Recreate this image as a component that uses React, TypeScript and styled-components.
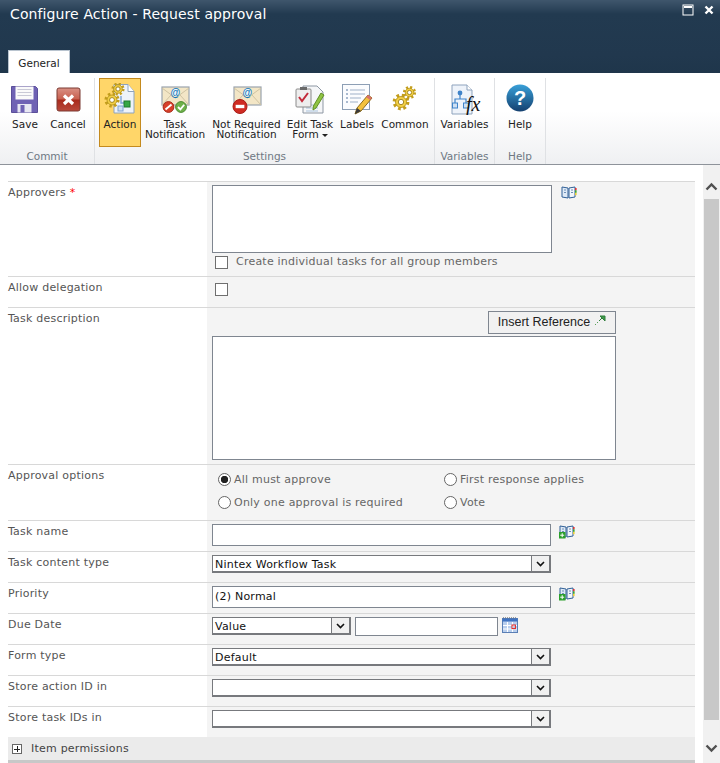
import React from 'react'
import styled, { createGlobalStyle } from 'styled-components'

const GlobalStyle = createGlobalStyle`
  html, body {
    margin: 0;
    padding: 0;
    background: #fff;
  }
  * {
    box-sizing: border-box;
  }
`

const Gear = ({ x, y, r, hub = '#fff' }: { x: number; y: number; r: number; hub?: string }) => {
  const c = 2 * Math.PI * r
  return (
    <g>
      <circle cx={x} cy={y} r={r} fill="none" stroke="#c39d1c" strokeWidth={r * 0.62} strokeDasharray={`${c / 16} ${c / 16}`} />
      <circle cx={x} cy={y} r={r * 0.86} fill="#f2cf45" stroke="#b08f18" strokeWidth="0.8" />
      <circle cx={x} cy={y} r={r * 0.42} fill={hub} stroke="#9c7e14" strokeWidth="0.9" />
    </g>
  )
}

const SaveIcon = () => (
  <svg width="32" height="32" viewBox="0 0 32 32">
    <path d="M2.5 3.5h24l2 2v24h-26z" fill="#6f62b4" stroke="#5b4f9a" />
    <rect x="6.5" y="3.5" width="18" height="13" fill="#fafafa" />
    <path d="M8.5 6.5h14M8.5 9.5h14M8.5 12.5h14" stroke="#c9c9d6" />
    <rect x="8.5" y="21" width="14" height="8.5" fill="#e8e8f2" />
    <rect x="11.5" y="22" width="4" height="7.5" fill="#6f62b4" />
  </svg>
)

const CancelIcon = () => (
  <svg width="32" height="32" viewBox="0 0 32 32">
    <defs>
      <linearGradient id="cancelFill" x1="0" y1="0" x2="0" y2="1">
        <stop offset="0" stopColor="#d99084" />
        <stop offset="0.48" stopColor="#c8604f" />
        <stop offset="0.52" stopColor="#a92a1c" />
        <stop offset="1" stopColor="#b9493b" />
      </linearGradient>
    </defs>
    <rect x="5" y="5" width="23" height="23" rx="2" fill="url(#cancelFill)" stroke="#7b3a33" />
    <path d="M12 12.5l9 8.5M21 12.5l-9 8.5" stroke="#fff" strokeWidth="3.2" />
  </svg>
)

const ActionIcon = () => (
  <svg width="32" height="32" viewBox="0 0 32 32">
    <path d="M10 1.5h14l6 7v21.5H10z" fill="#eef3fa" stroke="#8ea3bd" />
    <path d="M24 1.5v7h6" fill="#fff" stroke="#8ea3bd" />
    <path d="M17 13v7h6" fill="none" stroke="#7fa3d3" strokeWidth="1.4" />
    <rect x="20" y="18" width="6" height="6" fill="#36a744" stroke="#1f7b2c" />
    <rect x="14" y="23" width="5" height="5" fill="#cfe0f3" stroke="#7fa3d3" />
    <Gear x={14} y={6} r={5} />
    <Gear x={8} y={17} r={5.8} />
  </svg>
)

const Envelope = () => (
  <>
    <rect x="3" y="4" width="27" height="18" fill="#f3e6c6" stroke="#9aa3ad" strokeWidth="1.2" />
    <path d="M3 5l13.5 10L30 5M3 22l9-10M30 22l-9-10" fill="none" stroke="#cfc3a2" />
    <circle cx="16.5" cy="9.5" r="4" fill="#eef6fb" />
    <text x="16.5" y="13" fontSize="10" fontWeight="700" fontFamily="'Liberation Sans', sans-serif" textAnchor="middle" fill="#1277b8">@</text>
  </>
)

const NoEntry = ({ x, y, r }: { x: number; y: number; r: number }) => (
  <g>
    <circle cx={x} cy={y} r={r} fill="#cf2b22" stroke="#a81c16" />
    <rect x={x - r * 0.62} y={y - r * 0.24} width={r * 1.24} height={r * 0.48} fill="#fff" />
  </g>
)

const TaskNotificationIcon = () => (
  <svg width="32" height="32" viewBox="0 0 32 32">
    <Envelope />
    <circle cx="9.5" cy="24" r="5.4" fill="#d8402a" stroke="#a82a1a" />
    <path d="M6.5 26.5l6-5" stroke="#fff" strokeWidth="2" />
    <circle cx="22" cy="24" r="5.4" fill="#6fb14a" stroke="#4d8d32" />
    <path d="M19 24l2.4 2.4 3.8-4.6" fill="none" stroke="#fff" strokeWidth="1.8" />
  </svg>
)

const NotRequiredIcon = () => (
  <svg width="32" height="32" viewBox="0 0 32 32">
    <Envelope />
    <NoEntry x={9} y={23.5} r={7} />
  </svg>
)

const EditFormIcon = () => (
  <svg width="32" height="32" viewBox="0 0 32 32">
    <path d="M9 3h14l6 6v21H9z" fill="#f5f6f8" stroke="#8d97a3" />
    <path d="M12 22h12M12 25h12M12 28h12" stroke="#a9c3dd" />
    <rect x="2" y="6" width="15" height="18" rx="1" fill="#eee" stroke="#8a8a8a" />
    <rect x="6" y="4" width="7" height="3" fill="#6a6a6a" />
    <path d="M5 14l3 4 6-8" fill="none" stroke="#c22a3a" strokeWidth="2" />
    <path d="M27 10l3 2-8 13-3 2 .4-4z" fill="#90c443" stroke="#5f8f25" />
  </svg>
)

const LabelsIcon = () => (
  <svg width="32" height="32" viewBox="0 0 32 32">
    <rect x="1.5" y="1.5" width="27" height="25" fill="#fbfcfe" stroke="#8d9fb5" />
    <path d="M5 7h2M5 11h2M5 15h2M5 19h2" stroke="#5677a0" />
    <path d="M9 7h15M9 11h15M9 15h11M9 19h8" stroke="#9fb1c8" />
    <path d="M27 12l4 3-11 13-6 3 2-6z" fill="#f3c13c" stroke="#8a6a1a" />
    <path d="M27 12l4 3-2 2-4-3z" fill="#d9706a" />
    <path d="M16 25l-2 6 6-3z" fill="#3a3a3a" />
  </svg>
)

const CommonIcon = () => (
  <svg width="32" height="32" viewBox="0 0 32 32">
    <Gear x={20.5} y={9.5} r={5} />
    <Gear x={12} y={19} r={6.4} />
  </svg>
)

const VariablesIcon = () => (
  <svg width="32" height="32" viewBox="0 0 32 32">
    <path d="M3 2h15l5 5v24H3z" fill="#eef3fa" stroke="#8ea3bd" />
    <path d="M18 2v5h5" fill="#fff" stroke="#8ea3bd" />
    <circle cx="11" cy="10" r="2.4" fill="#3f83c9" />
    <path d="M11 12v4M6 20v-4h11v4" fill="none" stroke="#3f83c9" strokeWidth="1.2" />
    <rect x="3.5" y="20" width="5" height="5" fill="#cfe0f3" stroke="#3f83c9" />
    <rect x="14.5" y="20" width="5" height="5" fill="#cfe0f3" stroke="#3f83c9" />
    <text x="17" y="28" fontSize="20" fontStyle="italic" fontFamily="'Liberation Serif', serif" fill="#111">fx</text>
  </svg>
)

const HelpIcon = () => (
  <svg width="32" height="32" viewBox="0 0 32 32">
    <defs>
      <linearGradient id="helpFill" x1="0" y1="0" x2="0" y2="1">
        <stop offset="0" stopColor="#39a0d8" />
        <stop offset="1" stopColor="#14406f" />
      </linearGradient>
    </defs>
    <circle cx="16" cy="15" r="13.5" fill="url(#helpFill)" />
    <text x="16" y="22" fontSize="20" fontWeight="700" fontFamily="'Liberation Sans', sans-serif" textAnchor="middle" fill="#fff">?</text>
  </svg>
)

const BookIcon = ({ plus = false }: { plus?: boolean }) => (
  <svg width="16" height="15" viewBox="0 0 16 15">
    <path d="M1 2l6 1v10l-6-1z" fill="#dfeaf6" stroke="#2f5f96" />
    <path d="M14 2l-6 1v10l6-1z" fill="#f2f6fb" stroke="#2f5f96" />
    <path d="M3 5h2M3 7.5h2M10 5h2M10 7.5h2" stroke="#6e8fb6" />
    <rect x="14" y="3" width="1.6" height="2.4" fill="#d33" />
    <rect x="14" y="5.4" width="1.6" height="2.4" fill="#3a3" />
    <rect x="14" y="7.8" width="1.6" height="2.4" fill="#ec3" />
    {plus && (
      <>
        <rect x="0" y="8" width="6.5" height="6.5" fill="#2ca02c" />
        <path d="M3.2 9.2v4M1.2 11.2h4" stroke="#fff" />
      </>
    )}
  </svg>
)

const CalendarIcon = () => (
  <svg width="16" height="16" viewBox="0 0 16 16">
    <rect x="0.5" y="1.5" width="15" height="14" fill="#b9cfee" stroke="#5a7fb5" />
    <rect x="0.5" y="1.5" width="15" height="3" fill="#3f73c2" />
    <path d="M1 0.8h14" stroke="#777" strokeDasharray="1 1" />
    <path d="M5.5 5v10M10.5 5v10M1 8.5h14M1 12h14" stroke="#fff" />
    <rect x="10" y="8" width="3.4" height="3.6" fill="none" stroke="#d22" />
  </svg>
)

const ChevronDown = () => (
  <svg width="9" height="6" viewBox="0 0 9 6">
    <path d="M1 1l3.5 3.5L8 1" fill="none" stroke="#111" strokeWidth="1.6" />
  </svg>
)

const Page = styled.div`
  width: 720px;
  height: 763px;
  overflow: hidden;
  display: flex;
  flex-direction: column;
  font-family: 'DejaVu Sans', Verdana, sans-serif;
`

const TitleBar = styled.header`
  height: 73px;
  flex: none;
  display: flex;
  flex-direction: column;
  position: relative;
  background: linear-gradient(#3f566c 0, #223a50 14px, #21384e 55px, #1f364b 73px);
`

const Title = styled.h1`
  margin: 0;
  padding: 6px 0 0 10px;
  height: 50px;
  font-size: 14px;
  line-height: 17px;
  font-weight: 400;
  letter-spacing: 0.11px;
  color: #fff;
`

const WindowButtons = styled.div`
  position: absolute;
  top: 4px;
  right: 5px;
  display: flex;
  gap: 9px;
`

const Tabs = styled.nav`
  padding-left: 8px;
  display: flex;
`

const Tab = styled.div`
  width: 62px;
  height: 23px;
  background: #fff;
  border: 1px solid #b9c4cf;
  border-bottom: none;
  text-align: center;
  font-size: 10.5px;
  line-height: 24px;
  color: #222;
`

const Ribbon = styled.div`
  height: 92px;
  flex: none;
  display: flex;
  background: linear-gradient(#fff 0, #fff 38px, #eff0f2 91px);
  border-bottom: 1px solid #8e939a;
`

const Group = styled.section<{ $width: number }>`
  width: ${(p) => p.$width}px;
  margin-top: 5px;
  border-right: 1px solid #dfe1e4;
  display: flex;
  flex-direction: column;
`

const GroupItems = styled.div<{ $pad: number }>`
  display: flex;
  height: 69px;
  padding-left: ${(p) => p.$pad}px;
`

const GroupLabel = styled.div`
  margin-top: 2px;
  text-align: center;
  font-size: 10.5px;
  line-height: 14px;
  color: #6f7883;
`

const RibbonItem = styled.div<{ $width: number; $active?: boolean }>`
  width: ${(p) => p.$width}px;
  height: 69px;
  flex: none;
  display: flex;
  flex-direction: column;
  align-items: center;
  border: 1px solid ${(p) => (p.$active ? '#c48a1e' : 'transparent')};
  background: ${(p) => (p.$active ? '#ffd669' : 'transparent')};
`

const IconSlot = styled.div`
  height: 40px;
  padding-top: 4px;
  flex: none;
`

const ItemText = styled.div`
  font-size: 10.5px;
  line-height: 10px;
  text-align: center;
  color: #222;
  white-space: pre-line;
`

const Caret = styled.span`
  display: inline-block;
  margin-left: 3px;
  vertical-align: 1px;
  border-left: 3px solid transparent;
  border-right: 3px solid transparent;
  border-top: 3px solid #222;
`

const Body = styled.main`
  flex: 1;
  display: flex;
  min-height: 0;
`

const Form = styled.div`
  width: 687px;
  margin-left: 8px;
  padding-top: 16px;
  flex: none;
`

const Row = styled.div<{ $height: number }>`
  height: ${(p) => p.$height}px;
  display: flex;
  border-top: 1px solid #d8d8d8;
  font-size: 11px;
  letter-spacing: 0.22px;
`

const RowLabel = styled.div`
  width: 199px;
  flex: none;
  padding-top: 4px;
  line-height: 14px;
  color: #555;
`

const Required = styled.span`
  color: #f00;
`

const RowValue = styled.div`
  flex: 1;
  background: #f4f4f4;
  padding: 3px 0 0 5px;
  line-height: 14px;
  color: #666;
`

const InlineRow = styled.div<{ $gap?: number }>`
  display: flex;
  align-items: flex-start;
  gap: ${(p) => p.$gap ?? 4}px;
`

const TextArea = styled.div<{ $width: number; $height: number }>`
  width: ${(p) => p.$width}px;
  height: ${(p) => p.$height}px;
  background: #fff;
  border: 1px solid #7f8690;
  flex: none;
`

const TextInput = styled.input`
  width: 339px;
  height: 22px;
  padding: 0 2px 1px;
  margin: 0;
  border: 1px solid #7f8690;
  background: #fff;
  font: inherit;
  font-size: 11px;
  letter-spacing: inherit;
  color: #111;
  flex: none;
  border-radius: 0;
  outline: none;
`

const Check = styled.span<{ $top?: number }>`
  display: block;
  width: 13px;
  height: 13px;
  margin: ${(p) => p.$top ?? 0}px 0 0 3px;
  background: #fff;
  border: 1px solid #6f6f6f;
  flex: none;
`

const CheckRow = styled.div`
  display: flex;
  align-items: flex-start;
  gap: 8px;
  margin-top: 3px;
  line-height: 11px;
`

const InsertButton = styled.button`
  display: flex;
  align-items: center;
  justify-content: center;
  gap: 4px;
  width: 128px;
  height: 23px;
  margin: 0 0 2px 276px;
  padding: 0 0 2px;
  background: #f1f1f1;
  border: 1px solid #7f8690;
  font-family: 'Liberation Sans', Arial, sans-serif;
  font-size: 12.5px;
  letter-spacing: 0;
  color: #222;
`

const OptionGrid = styled.div`
  display: grid;
  grid-template-columns: 226px 1fr;
  row-gap: 9px;
  padding: 5px 0 0 6px;
`

const Option = styled.label`
  display: flex;
  align-items: flex-start;
  gap: 3px;
  height: 14px;
  line-height: 14px;
  color: #666;
`

const Radio = styled.span<{ $on?: boolean }>`
  width: 13px;
  height: 13px;
  flex: none;
  border-radius: 50%;
  border: 1px solid #666;
  background: radial-gradient(circle, ${(p) => (p.$on ? '#222 0, #222 3.4px, #fff 4px' : '#fff 0, #fff 100%')});
`

const SelectBox = styled.div<{ $width: number }>`
  width: ${(p) => p.$width}px;
  height: 18px;
  flex: none;
  display: flex;
  justify-content: space-between;
  background: #fff;
  border: 1px solid #77797d;
  border-right-width: 2px;
  border-bottom-width: 2px;
  color: #111;
  line-height: 17px;
  padding-left: 2px;
  overflow: hidden;
`

const SelectArrow = styled.span`
  width: 18px;
  height: 15px;
  display: flex;
  align-items: center;
  justify-content: center;
  background: #f0f0f0;
  border-left: 1px solid #77797d;
`

const ShortInput = styled.input`
  width: 143px;
  height: 19px;
  margin: 0;
  border: 1px solid #7f8690;
  background: #fff;
  flex: none;
  border-radius: 0;
`

const Section = styled.div`
  height: 26px;
  display: flex;
  align-items: flex-start;
  gap: 9px;
  padding: 5px 0 0 4px;
  background: #ebebeb;
  border-bottom: 3px solid #c8c8c8;
  font-size: 11px;
  letter-spacing: 0.22px;
  line-height: 14px;
  color: #444;
`

const Expander = styled.span`
  position: relative;
  width: 10px;
  height: 10px;
  margin-top: 2px;
  flex: none;
  background: #fff;
  border: 1px solid #666;

  &::before,
  &::after {
    content: '';
    position: absolute;
    background: #222;
  }
  &::before {
    left: 1px;
    top: 3.5px;
    width: 6px;
    height: 1px;
  }
  &::after {
    left: 3.5px;
    top: 1px;
    width: 1px;
    height: 6px;
  }
`

const Scrollbar = styled.aside`
  width: 17px;
  margin-left: 8px;
  flex: none;
  display: flex;
  flex-direction: column;
  align-items: center;
  background: #f1f1f1;
`

const ScrollButton = styled.div<{ $height: number; $inset: string }>`
  height: ${(p) => p.$height}px;
  padding: ${(p) => p.$inset};
  flex: none;
  display: flex;
  justify-content: center;
`

const ScrollThumb = styled.div`
  width: 15px;
  height: 521px;
  flex: none;
  background: #c8c8c8;
`

const InsertArrow = styled.svg`
  flex: none;
  margin-top: -2px;
`

const Select = ({ width, value = '' }: { width: number; value?: string }) => (
  <SelectBox $width={width}>
    <span>{value}</span>
    <SelectArrow>
      <ChevronDown />
    </SelectArrow>
  </SelectBox>
)

const items = [
  { title: 'Commit', width: 95, pad: 6, list: [
    { text: 'Save', width: 38, icon: <SaveIcon /> },
    { text: 'Cancel', width: 48, icon: <CancelIcon /> },
  ] },
  { title: 'Settings', width: 340, pad: 4, list: [
    { text: 'Action', width: 42, icon: <ActionIcon />, active: true },
    { text: 'Task\nNotification', width: 68, icon: <TaskNotificationIcon /> },
    { text: 'Not Required\nNotification', width: 75, icon: <NotRequiredIcon /> },
    { text: 'Edit Task\nForm', width: 52, icon: <EditFormIcon />, caret: true },
    { text: 'Labels', width: 42, icon: <LabelsIcon /> },
    { text: 'Common', width: 54, icon: <CommonIcon /> },
  ] },
  { title: 'Variables', width: 60, pad: 0, list: [
    { text: 'Variables', width: 59, icon: <VariablesIcon /> },
  ] },
  { title: 'Help', width: 51, pad: 0, list: [
    { text: 'Help', width: 50, icon: <HelpIcon /> },
  ] },
]

export default function App() {
  return (
    <Page>
      <GlobalStyle />
      <TitleBar>
        <Title>Configure Action - Request approval</Title>
        <WindowButtons>
          <svg width="12" height="12" viewBox="0 0 12 12">
            <rect x="1" y="1" width="10" height="10" fill="none" stroke="#fff" />
            <rect x="2" y="2" width="8" height="2" fill="#fff" />
          </svg>
          <svg width="12" height="12" viewBox="0 0 12 12">
            <path d="M2.5 2.5l7 7M9.5 2.5l-7 7" stroke="#fff" strokeWidth="2.4" />
          </svg>
        </WindowButtons>
        <Tabs>
          <Tab>General</Tab>
        </Tabs>
      </TitleBar>

      <Ribbon>
        {items.map((group) => (
          <Group key={group.title} $width={group.width}>
            <GroupItems $pad={group.pad}>
              {group.list.map((item) => (
                <RibbonItem key={item.text} $width={item.width} $active={item.active}>
                  <IconSlot>{item.icon}</IconSlot>
                  <ItemText>
                    {item.text}
                    {item.caret && <Caret />}
                  </ItemText>
                </RibbonItem>
              ))}
            </GroupItems>
            <GroupLabel>{group.title}</GroupLabel>
          </Group>
        ))}
      </Ribbon>

      <Body>
        <Form>
          <Row $height={95}>
            <RowLabel>
              Approvers <Required>*</Required>
            </RowLabel>
            <RowValue>
              <InlineRow $gap={9}>
                <TextArea $width={340} $height={68} />
                <BookIcon />
              </InlineRow>
              <CheckRow>
                <Check />
                Create individual tasks for all group members
              </CheckRow>
            </RowValue>
          </Row>
          <Row $height={31}>
            <RowLabel>Allow delegation</RowLabel>
            <RowValue>
              <Check $top={3} />
            </RowValue>
          </Row>
          <Row $height={157}>
            <RowLabel>Task description</RowLabel>
            <RowValue>
              <InsertButton>
                Insert Reference
                <InsertArrow width="12" height="11" viewBox="0 0 12 11">
                  <path d="M1 10l1-1M3 8l1-1" stroke="#5aa05a" />
                  <path d="M5 6l3-3M6 1h5v5z" fill="#3f9a4a" stroke="#2f7f3a" />
                </InsertArrow>
              </InsertButton>
              <TextArea $width={404} $height={124} />
            </RowValue>
          </Row>
          <Row $height={56}>
            <RowLabel>Approval options</RowLabel>
            <RowValue>
              <OptionGrid>
                <Option><Radio $on />All must approve</Option>
                <Option><Radio />First response applies</Option>
                <Option><Radio />Only one approval is required</Option>
                <Option><Radio />Vote</Option>
              </OptionGrid>
            </RowValue>
          </Row>
          <Row $height={31}>
            <RowLabel>Task name</RowLabel>
            <RowValue>
              <InlineRow $gap={8}>
                <TextInput />
                <BookIcon plus />
              </InlineRow>
            </RowValue>
          </Row>
          <Row $height={31}>
            <RowLabel>Task content type</RowLabel>
            <RowValue>
              <Select width={339} value="Nintex Workflow Task" />
            </RowValue>
          </Row>
          <Row $height={31}>
            <RowLabel>Priority</RowLabel>
            <RowValue>
              <InlineRow $gap={8}>
                <TextInput defaultValue="(2) Normal" />
                <BookIcon plus />
              </InlineRow>
            </RowValue>
          </Row>
          <Row $height={31}>
            <RowLabel>Due Date</RowLabel>
            <RowValue>
              <InlineRow>
                <Select width={139} value="Value" />
                <ShortInput />
                <CalendarIcon />
              </InlineRow>
            </RowValue>
          </Row>
          <Row $height={31}>
            <RowLabel>Form type</RowLabel>
            <RowValue>
              <Select width={339} value="Default" />
            </RowValue>
          </Row>
          <Row $height={31}>
            <RowLabel>Store action ID in</RowLabel>
            <RowValue>
              <Select width={339} />
            </RowValue>
          </Row>
          <Row $height={31}>
            <RowLabel>Store task IDs in</RowLabel>
            <RowValue>
              <Select width={339} />
            </RowValue>
          </Row>
          <Section>
            <Expander />
            Item permissions
          </Section>
        </Form>
        <Scrollbar>
          <ScrollButton $height={34} $inset="17px 0 0">
            <svg width="13" height="9" viewBox="0 0 13 9">
              <path d="M1.5 7.5l5-5 5 5" fill="none" stroke="#505050" strokeWidth="2.4" />
            </svg>
          </ScrollButton>
          <ScrollThumb />
          <ScrollButton $height={43} $inset="24px 0 0">
            <svg width="13" height="9" viewBox="0 0 13 9">
              <path d="M1.5 1.5l5 5 5-5" fill="none" stroke="#505050" strokeWidth="2.4" />
            </svg>
          </ScrollButton>
        </Scrollbar>
      </Body>
    </Page>
  )
}
